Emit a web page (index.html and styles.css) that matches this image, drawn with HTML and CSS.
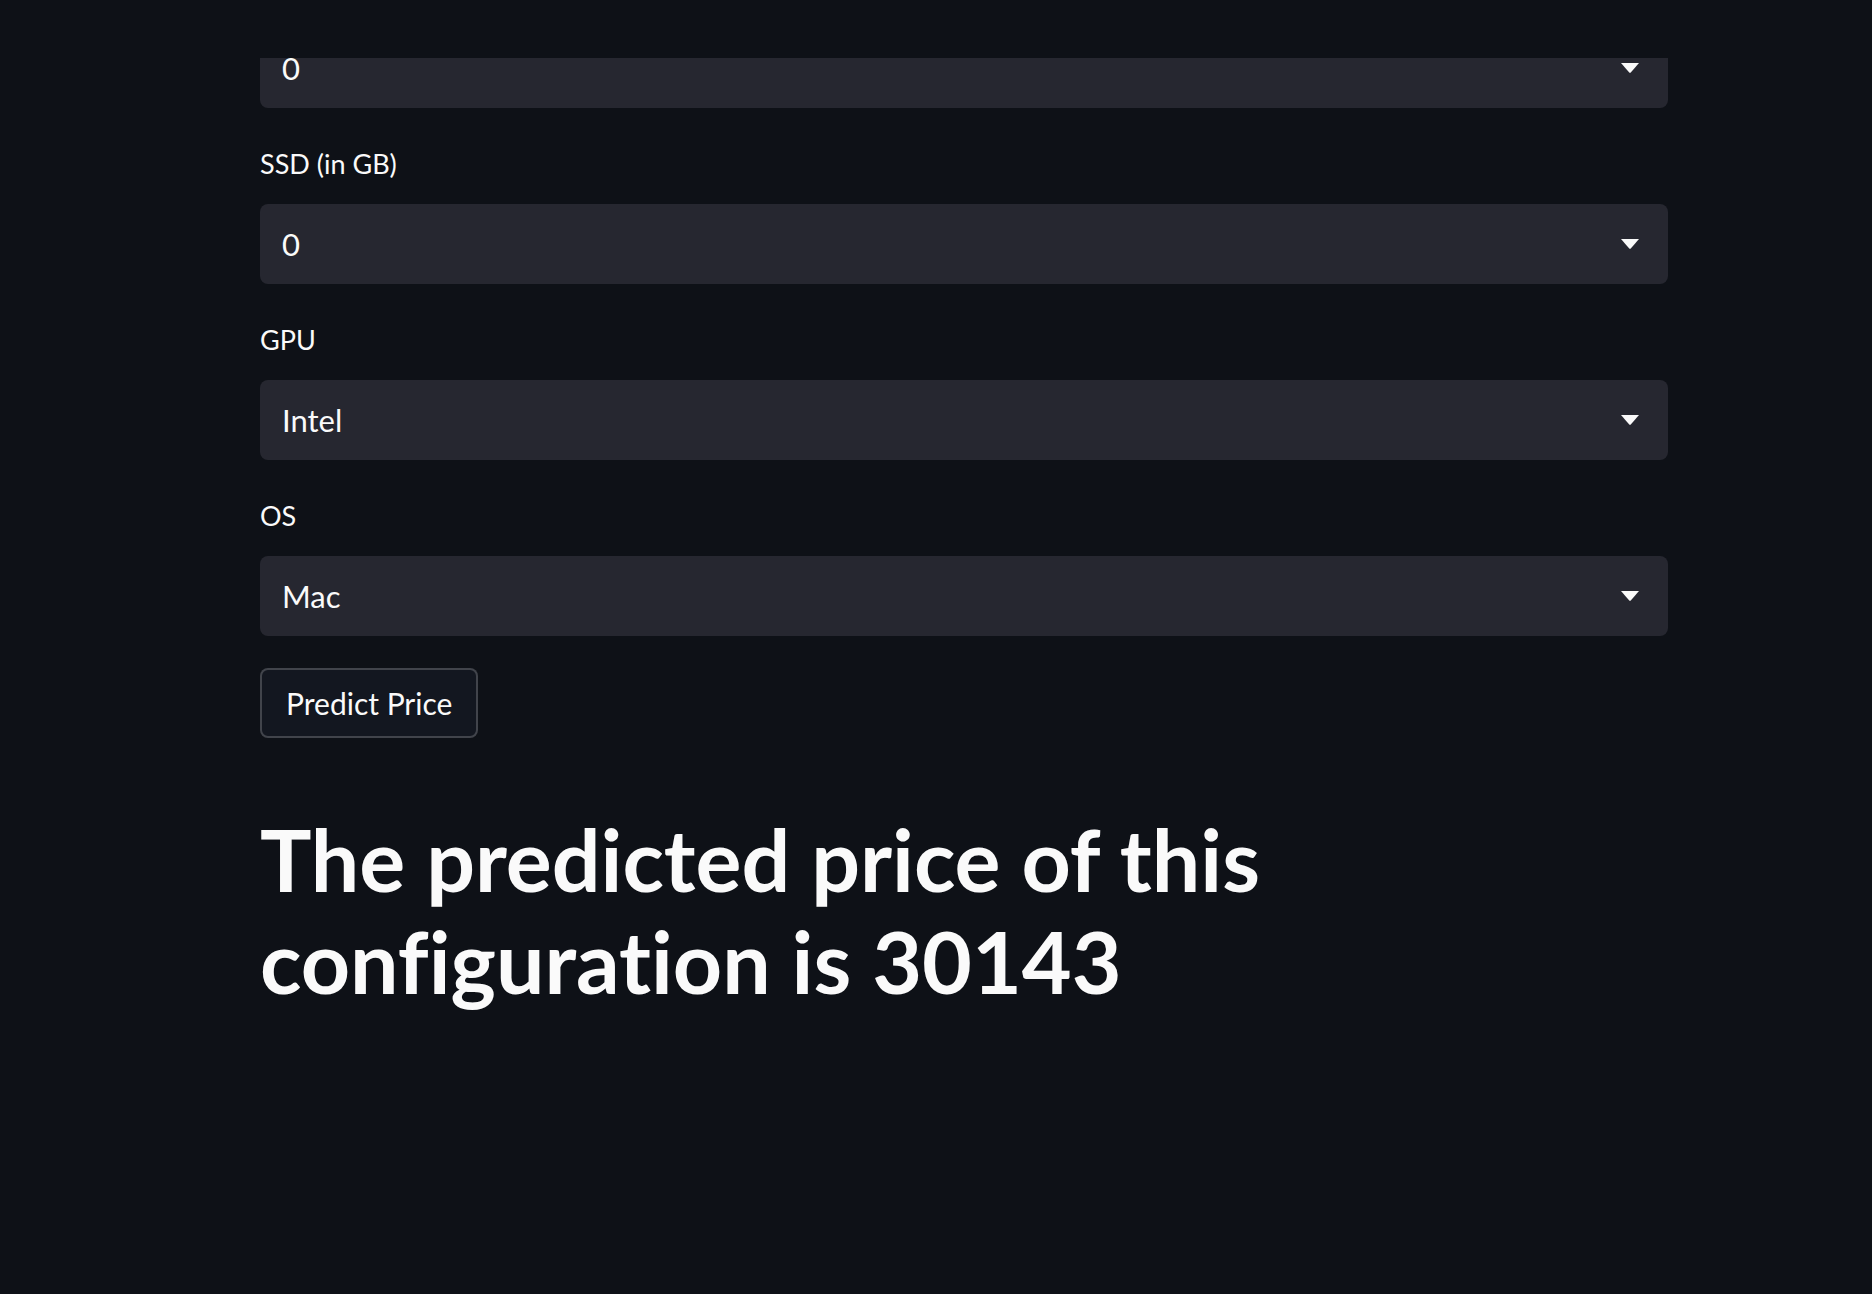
FILE: index.html
```html
<!DOCTYPE html>
<html>
<head>
<meta charset="utf-8">
<link rel="stylesheet" href="styles.css">
</head>
<body>
<header class="top-bar"></header>
<main class="main">
  <div class="select"><span class="select-value">0</span><svg class="caret" viewBox="0 0 18 10"><path d="M0 0 H18 L10 9.2 Q9 10.2 8 9.2 Z" fill="#fafafa"/></svg></div>
  <div class="widget">
    <label class="label">SSD (in GB)</label>
    <div class="select"><span class="select-value">0</span><svg class="caret" viewBox="0 0 18 10"><path d="M0 0 H18 L10 9.2 Q9 10.2 8 9.2 Z" fill="#fafafa"/></svg></div>
  </div>
  <div class="widget">
    <label class="label">GPU</label>
    <div class="select"><span class="select-value">Intel</span><svg class="caret" viewBox="0 0 18 10"><path d="M0 0 H18 L10 9.2 Q9 10.2 8 9.2 Z" fill="#fafafa"/></svg></div>
  </div>
  <div class="widget">
    <label class="label">OS</label>
    <div class="select"><span class="select-value">Mac</span><svg class="caret" viewBox="0 0 18 10"><path d="M0 0 H18 L10 9.2 Q9 10.2 8 9.2 Z" fill="#fafafa"/></svg></div>
  </div>
  <div><button class="btn">Predict Price</button></div>
  <h1 class="title">The predicted price of this configuration is 30143</h1>
</main>
</body>
</html>
```
FILE: styles.css
```css
html, body {
  margin: 0;
  padding: 0;
  background: #0e1117;
  color: #fafafa;
  font-family: Lato, "Noto Sans", sans-serif;
  font-variant-ligatures: none;
}
.top-bar {
  position: fixed;
  top: 0;
  left: 0;
  right: 0;
  height: 58px;
  background: #0e1117;
  z-index: 10;
}
.main {
  width: 1408px;
  margin-left: 260px;
  padding-top: 28px;
  display: flex;
  flex-direction: column;
  gap: 32px;
}
.widget {
  display: flex;
  flex-direction: column;
}
.label {
  height: 48px;
  line-height: 48px;
  font-size: 27px;
  margin-bottom: 16px;
}
.select {
  height: 80px;
  box-sizing: border-box;
  background: #262730;
  border-radius: 8px;
  display: flex;
  align-items: center;
  justify-content: space-between;
  padding: 0 29px 0 22px;
}
.select-value {
  font-size: 31px;
}
.caret {
  width: 18px;
  height: 10px;
}
.btn {
  font-family: inherit;
  font-variant-ligatures: none;
  font-size: 30px;
  line-height: 52px;
  color: #fafafa;
  background: #131720;
  border: 2px solid rgba(250, 250, 250, 0.2);
  border-radius: 8px;
  padding: 7px 24px;
}
.title {
  margin: 0;
  padding: 38px 0 32px;
  font-size: 86px;
  line-height: 102px;
  font-weight: 700;
  width: 1100px;
}
```
